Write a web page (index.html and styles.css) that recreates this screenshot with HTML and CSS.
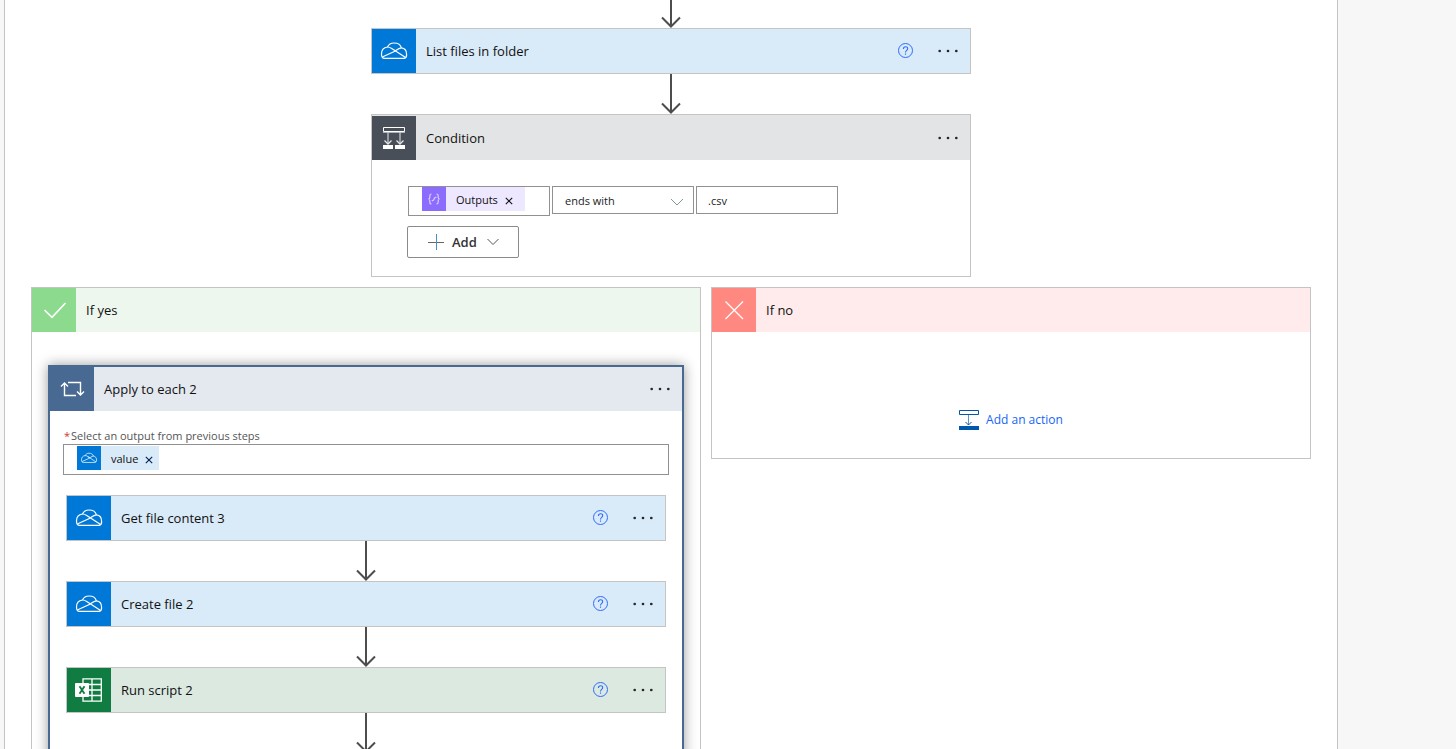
FILE: index.html
```html
<!DOCTYPE html>
<html lang="en">
<head>
<meta charset="utf-8">
<title>Flow designer</title>
<link rel="stylesheet" href="styles.css">
</head>
<body>
<svg class="defs" aria-hidden="true">
  <symbol id="arrow" viewBox="0 0 20 40"><path d="M10 0V39M1 29.500l9 9 9-9" fill="none" stroke="#4d4d4d" stroke-width="2"/></symbol>
  <symbol id="cloud" viewBox="0 0 44 44"><g fill="none" stroke="#fff" stroke-width="1.2" stroke-linejoin="round"><path d="M12.500 29.400H32a3.600 3.600 0 0 0 2.600-3.900c0-3.700-1.700-6.300-5.200-6.600C28.600 15.800 25.600 14 22 14c-3.300 0-5.500 1.700-6.500 4C11.500 18.500 9.500 21.200 9.500 25c0 2.600.8 4.400 3 4.400z"/><path d="M15.500 18c1.700-.1 2.800.5 4.200 1.400L33.600 28.500M10.300 28l11.500-5.300c2.500-1.200 4.200-3.500 7.600-3.800M19.700 19.400l4 2.500"/></g></symbol>
  <symbol id="excel" viewBox="0 0 44 44"><path d="M16 10.800h18.300v22.400H16zM16 16.500h18M16 22h18M16 27.500h18M25 11v22" fill="none" stroke="#fff" stroke-width="1.300"/><rect x="8" y="15" width="14" height="14" rx="1" fill="#fff"/><path d="M12.500 18.200l5 7.600M17.500 18.200l-5 7.600" stroke="#107c41" stroke-width="1.800"/></symbol>
  <symbol id="condition" viewBox="0 0 44 44"><path d="M11.500 11.500h21v4h-21z" fill="none" stroke="#fff"/><path d="M11 16.500h22" stroke="#aeb1b6"/><path d="M16 16v12M28 16v12" stroke="#c4c6c9" stroke-width="1.300"/><path d="M12.500 24.500l3.500 3.500 3.500-3.500M24.500 24.500l3.500 3.500 3.500-3.500" fill="none" stroke="#e4e5e6" stroke-width="1.300"/><path d="M11 29h10v4H11zM23 29h10v4H23z" fill="#fff"/></symbol>
  <symbol id="loop" viewBox="0 0 44 44"><path d="M18 15.500h12.500V27.500M27 24.500l3.500 3.500 3.500-3.500M26 28.500H14.500V16M11 19.500l3.500-3.500 3.500 3.500" fill="none" stroke="#fff" stroke-width="1.400"/></symbol>
  <symbol id="help" viewBox="0 0 15 15"><circle cx="7.500" cy="7.500" r="7" fill="none" stroke="#2f6bff"/><path d="M5.400 5.900c0-1.300.9-2.100 2.200-2.100s2.100.8 2.100 1.900c0 1.700-2.200 1.700-2.200 3.700M7.500 10.500v1.200" fill="none" stroke="#2f6bff" stroke-width="1.100"/></symbol>
  <symbol id="dots" viewBox="0 0 22 4"><g fill="#262626"><circle cx="2.700" cy="2" r="1.350"/><circle cx="11" cy="2" r="1.350"/><circle cx="19.300" cy="2" r="1.350"/></g></symbol>
  <symbol id="chevron" viewBox="0 0 14 8"><path d="M1 1l6 6 6-6" fill="none" stroke="currentColor"/></symbol>
  <symbol id="remove" viewBox="0 0 8 8"><path d="M.8.8l6.400 6.400M7.200.8L.8 7.200" stroke="currentColor" stroke-width="1.100"/></symbol>
</svg>

<main class="canvas">
  <div class="arrow arrow-first"><svg><use href="#arrow"/></svg></div>

  <section class="card action">
    <header class="head head-blue">
      <svg class="tile tile-blue"><use href="#cloud"/></svg>
      <h2 class="title">List files in folder</h2>
      <button class="help" aria-label="Help"><svg><use href="#help"/></svg></button>
      <button class="more" aria-label="More"><svg><use href="#dots"/></svg></button>
    </header>
  </section>

  <div class="arrow"><svg><use href="#arrow"/></svg></div>

  <section class="card">
    <header class="head head-gray">
      <svg class="tile tile-slate"><use href="#condition"/></svg>
      <h2 class="title">Condition</h2>
      <button class="more" aria-label="More"><svg><use href="#dots"/></svg></button>
    </header>
    <div class="condition-body">
      <div class="condition-row">
        <div class="field token-field">
          <span class="token token-violet">
            <svg class="token-icon" viewBox="0 0 24 24"><path d="M9.500 7C8 7 7.800 7.800 7.800 9v1.500c0 1-.5 1.500-1.500 1.500 1 0 1.500.5 1.500 1.500V15c0 1.200.2 2 1.700 2M14.500 7c1.500 0 1.700.8 1.700 2v1.500c0 1 .5 1.500 1.500 1.500-1 0-1.500.5-1.500 1.500V15c0 1.200-.2 2-1.700 2M9.800 14l1.800-1 1-2 1.800-1" fill="none" stroke="#d9ceff" stroke-width="1.200"/></svg>
            <span class="token-text">Outputs</span>
            <button class="remove" aria-label="Remove Outputs"><svg><use href="#remove"/></svg></button>
          </span>
        </div>
        <div class="select-wrap">
          <select class="field select" aria-label="Operator"><option>ends with</option></select>
          <svg class="select-chevron"><use href="#chevron"/></svg>
        </div>
        <input class="field text-input" type="text" value=".csv" aria-label="Value">
      </div>
      <button class="add"><svg class="plus" viewBox="0 0 16 16"><path d="M0 8.500h16" stroke="#666"/><path d="M8.500 0v16" stroke="#4792c4"/></svg><span>Add</span><svg class="add-chevron" viewBox="0 0 12 8"><path d="M.5 1L6 6.500 11.500 1" fill="none" stroke="currentColor"/></svg></button>
    </div>
  </section>

  <div class="branches">
    <section class="branch branch-yes">
      <header class="head head-yes">
        <svg class="tile tile-green" viewBox="0 0 44 44"><path d="M12.500 22l7.500 7.300L33.500 15" fill="none" stroke="#fff" stroke-width="1.700"/></svg>
        <h2 class="title">If yes</h2>
      </header>
      <div class="yes-body">
        <section class="loop">
          <header class="head head-loop">
            <svg class="tile tile-loop"><use href="#loop"/></svg>
            <h2 class="title">Apply to each 2</h2>
            <button class="more" aria-label="More"><svg><use href="#dots"/></svg></button>
          </header>
          <div class="loop-body">
            <div class="label"><span class="required">*</span>Select an output from previous steps</div>
            <div class="field token-field loop-field">
              <span class="token token-blue">
                <svg class="token-icon" viewBox="2 2 40 40"><use href="#cloud" width="44" height="44"/></svg>
                <span class="token-text">value</span>
                <button class="remove" aria-label="Remove value"><svg><use href="#remove"/></svg></button>
              </span>
            </div>
            <div class="steps">
              <section class="card action">
                <header class="head head-blue">
                  <svg class="tile tile-blue"><use href="#cloud"/></svg>
                  <h2 class="title">Get file content 3</h2>
                  <button class="help" aria-label="Help"><svg><use href="#help"/></svg></button>
                  <button class="more" aria-label="More"><svg><use href="#dots"/></svg></button>
                </header>
              </section>
              <div class="arrow"><svg><use href="#arrow"/></svg></div>
              <section class="card action">
                <header class="head head-blue">
                  <svg class="tile tile-blue"><use href="#cloud"/></svg>
                  <h2 class="title">Create file 2</h2>
                  <button class="help" aria-label="Help"><svg><use href="#help"/></svg></button>
                  <button class="more" aria-label="More"><svg><use href="#dots"/></svg></button>
                </header>
              </section>
              <div class="arrow"><svg><use href="#arrow"/></svg></div>
              <section class="card action">
                <header class="head head-excel">
                  <svg class="tile tile-excel"><use href="#excel"/></svg>
                  <h2 class="title">Run script 2</h2>
                  <button class="help" aria-label="Help"><svg><use href="#help"/></svg></button>
                  <button class="more" aria-label="More"><svg><use href="#dots"/></svg></button>
                </header>
              </section>
              <div class="arrow"><svg><use href="#arrow"/></svg></div>
            </div>
          </div>
        </section>
      </div>
    </section>

    <section class="branch branch-no">
      <header class="head head-no">
        <svg class="tile tile-red" viewBox="0 0 44 44"><path d="M13.500 13.500l17.500 17.500M31 13.500L13.500 31" stroke="#fff" stroke-width="1.200"/></svg>
        <h2 class="title">If no</h2>
      </header>
      <div class="no-body">
        <a class="add-action" href="#"><svg viewBox="0 0 20 20"><path d="M.5.500h19v4H.5z" fill="#fff" stroke="#0058ad"/><path d="M9.500 5v10" stroke="#5a94c8"/><path d="M6.500 12l3 3 3-3" fill="none" stroke="#0058ad"/><path d="M0 16h20v4H0z" fill="#0058ad"/></svg>Add an action</a>
      </div>
    </section>
  </div>
</main>
</body>
</html>
```
FILE: styles.css
```css
* { box-sizing: border-box; }

body {
  margin: 0;
  height: 100vh;
  overflow: hidden;
  background: #f7f7f7;
  color: #111;
  font: 13px/20px "Open Sans", "Noto Sans", sans-serif;
}

svg { display: block; flex: none; }
button { padding: 0; border: 0; background: none; font: inherit; color: inherit; }

.defs { position: absolute; width: 0; height: 0; }

.canvas {
  display: flex;
  flex-direction: column;
  align-items: center;
  min-height: 100vh;
  margin: 0 118px 0 4px;
  padding: 0 26px;
  border: solid #c4c4c4;
  border-width: 0 1px;
  background: #fff;
}

.arrow { display: flex; justify-content: center; align-items: flex-end; height: 40px; overflow: hidden; }
.arrow svg { width: 20px; height: 40px; }
.arrow-first { height: 28px; }

.card { width: 600px; max-width: 100%; border: 1px solid #c4c4c4; background: #fff; }

.head { display: flex; align-items: center; }
.tile { width: 44px; height: 44px; }
.title { flex: 1; margin: 0; padding-left: 10px; font-size: 13px; font-weight: 400; }
.help { display: flex; align-items: flex-start; height: 16px; margin-right: 13px; }
.help svg { width: 15px; height: 15px; }
.more { width: 44px; height: 44px; }
.more svg { width: 22px; height: 4px; margin: 0 auto; }

.head-blue { background: #d9eaf8; }
.head-gray { padding-top: 1px; background: #e3e4e5; }
.head-yes { background: #edf7ee; }
.head-no { background: #ffebeb; }
.head-loop { background: #e4e8ef; }
.head-excel { background: #dbe9e1; }
.tile-blue { background: #0078d7; }
.tile-slate { background: #484f58; }
.tile-green { background: #8bda8d; }
.tile-red { background: #ff8981; }
.tile-loop { background: #486991; }
.tile-excel { background: #107c41; }

.condition-body { padding: 26px 35px 18px; }
.condition-row { display: flex; align-items: flex-start; gap: 2px; padding-left: 1px; }

.field {
  width: 142px;
  height: 28px;
  border: 1px solid #919191;
  border-radius: 0;
  background: #fff;
  color: #222;
  font: 11px/18px "Open Sans", "Noto Sans", sans-serif;
}
.token-field { display: flex; align-items: flex-start; height: 30px; padding-left: 13px; }
.select-wrap { position: relative; }
.select { display: block; padding: 2px 12px 0; appearance: none; }
.select-chevron { position: absolute; right: 10px; top: 12px; width: 14px; height: 8px; color: #7f9a85; pointer-events: none; }
.text-input { padding: 0 11px; }

.token { display: flex; align-items: center; height: 24px; color: #111; }
.token-text { padding-top: 2px; }
.token-icon { width: 24px; height: 24px; margin-right: 10px; }
.token-violet { padding-right: 12px; background: #ede7ff; }
.token-violet .token-icon { background: #8c6cff; }
.token-blue { padding-right: 6px; background: #d9eaf8; }
.token-blue .token-icon { background: #0078d7; }
.remove { margin: 4px 0 0 7px; }
.remove svg { width: 8px; height: 8px; }
.token-blue .remove { color: #002050; }

.add {
  display: flex;
  align-items: center;
  width: 112px;
  height: 32px;
  margin-top: 10px;
  padding-left: 20px;
  border: 1px solid #8a8a8a;
  border-radius: 2px;
  background: #fff;
  color: #333;
  font-size: 13px;
  font-weight: 600;
}
.plus { width: 16px; height: 16px; margin-right: 8px; }
.add-chevron { width: 12px; height: 8px; margin-left: 10px; color: #555; }

.branches {
  display: grid;
  grid-template-columns: minmax(0, 67fr) minmax(0, 60fr);
  align-items: start;
  gap: 10px;
  width: 100%;
  margin-top: 10px;
}
.branch { border: 1px solid #c4c4c4; }
.yes-body { padding: 33px 16px 16px; }

.loop { border: 2px solid #486991; background: #fff; box-shadow: 0 0 12px rgba(0, 0, 0, .4); }
.loop-body { padding: 17px 13px; }
.label { padding-left: 1px; color: #555; font-size: 11px; line-height: 16px; }
.required { margin-right: 1px; color: #d13438; }
.loop-field { width: 100%; height: 31px; padding-top: 1px; }
.steps { padding: 20px 3px 0; }

.no-body { display: flex; justify-content: center; padding: 78px 0 28px; }
.add-action { display: flex; align-items: center; gap: 7px; color: #1565f5; font-size: 12px; text-decoration: none; }
.add-action svg { width: 20px; height: 20px; }
```
